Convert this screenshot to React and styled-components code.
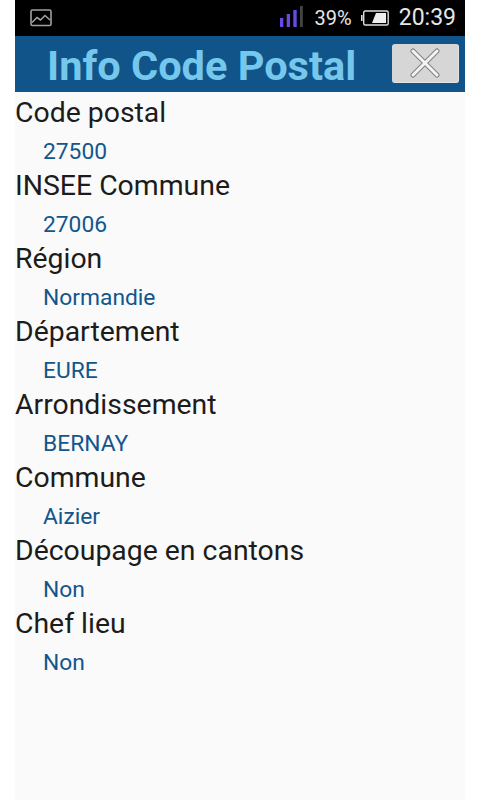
import React from "react";
import styled, { createGlobalStyle } from "styled-components";

const Global = createGlobalStyle`
  html, body { margin: 0; padding: 0; background: #fff; height: 100%; overflow: hidden; }
  #root { height: 800px; }
`;

const Phone = styled.div`
  width: 450px;
  height: 800px;
  margin-left: 15px;
  background: #fafafa;
  font-family: Roboto, sans-serif;
  display: flex;
  flex-direction: column;
`;

const StatusBar = styled.div`
  height: 36px;
  background: #000;
  color: #e6e6e6;
  display: flex;
  align-items: center;
  padding: 0 9px 0 15px;
  box-sizing: border-box;
`;

const Spacer = styled.div`
  flex: 1;
`;

const SignalSlot = styled.div`
  display: flex;
  margin-top: -3px;
`;

const Percent = styled.span`
  font-size: 20px;
  line-height: 38px;
  margin-left: 11px;
  margin-right: 9px;
`;

const Clock = styled.span`
  font-size: 23px;
  line-height: 38px;
  margin-left: 10px;
`;

const Header = styled.div`
  height: 56px;
  box-sizing: border-box;
  background: #10548a;
  display: flex;
  align-items: center;
  padding: 0 6px 0 32px;
`;

const Title = styled.div`
  flex: 1;
  color: #75c8ec;
  font-size: 41.5px;
  font-weight: 700;
  line-height: 60px;
  padding-top: 4px;
  white-space: nowrap;
`;

const CloseButton = styled.div`
  width: 67px;
  height: 39px;
  margin-bottom: 1px;
  background: #d6d6d6;
  border-radius: 3px;
  border-right: 1px solid #e4e4e4;
  border-bottom: 1px solid #e4e4e4;
  box-sizing: border-box;
  display: flex;
  align-items: center;
  justify-content: center;
`;

const List = styled.div`
  display: flex;
  flex-direction: column;
`;

const Label = styled.div`
  height: 41px;
  line-height: 41px;
  font-size: 28.4px;
  color: #1c1c1c;
`;

const Value = styled.div`
  height: 32px;
  line-height: 37px;
  font-size: 22.8px;
  color: #12568c;
  padding-left: 28px;
`;

const rows = [
  ["Code postal", "27500"],
  ["INSEE Commune", "27006"],
  ["Région", "Normandie"],
  ["Département", "EURE"],
  ["Arrondissement", "BERNAY"],
  ["Commune", "Aizier"],
  ["Découpage en cantons", "Non"],
  ["Chef lieu", "Non"],
];

const PictureIcon = () => (
  <svg width="22" height="18" viewBox="0 0 22 18" fill="none" stroke="#a0a0a0" strokeWidth="1.6">
    <rect x="1" y="1" width="20" height="15.5" rx="1.5" />
    <path d="M2 13.5 L7 8.5 L10.5 11 L15 6.5 L20 11" />
  </svg>
);

const Signal = () => (
  <svg width="24" height="21" viewBox="0 0 24 21">
    <rect x="0" y="12" width="3.3" height="9" fill="#6a48e8" />
    <rect x="6.7" y="8" width="3.3" height="13" fill="#6a48e8" />
    <rect x="13.3" y="4" width="3.4" height="17" fill="#6a48e8" />
    <rect x="20" y="0" width="2.8" height="21" fill="#444" />
  </svg>
);

const Battery = () => (
  <svg width="28" height="16" viewBox="0 0 28 16">
    <rect x="0" y="5" width="1.6" height="6" fill="#ddd" />
    <rect x="2.7" y="1" width="24.5" height="14" rx="1.5" fill="none" stroke="#ddd" strokeWidth="1.4" />
    <path d="M11 13 L15 3 H25 V13 Z" fill="#eee" />
  </svg>
);

const CloseIcon = () => (
  <svg width="30" height="30" viewBox="0 0 30 30">
    <path d="M3 3 L27 27 M27 3 L3 27" stroke="#808080" strokeWidth="5" strokeLinecap="round" />
    <path d="M3 3 L27 27 M27 3 L3 27" stroke="#f4f4f4" strokeWidth="3" strokeLinecap="round" />
  </svg>
);

export default function App() {
  return (
    <>
      <Global />
      <Phone>
        <StatusBar>
          <PictureIcon />
          <Spacer />
          <SignalSlot>
            <Signal />
          </SignalSlot>
          <Percent>39%</Percent>
          <Battery />
          <Clock>20:39</Clock>
        </StatusBar>
        <Header>
          <Title>Info Code Postal</Title>
          <CloseButton>
            <CloseIcon />
          </CloseButton>
        </Header>
        <List>
          {rows.map(([label, value]) => (
            <React.Fragment key={label}>
              <Label>{label}</Label>
              <Value>{value}</Value>
            </React.Fragment>
          ))}
        </List>
      </Phone>
    </>
  );
}
